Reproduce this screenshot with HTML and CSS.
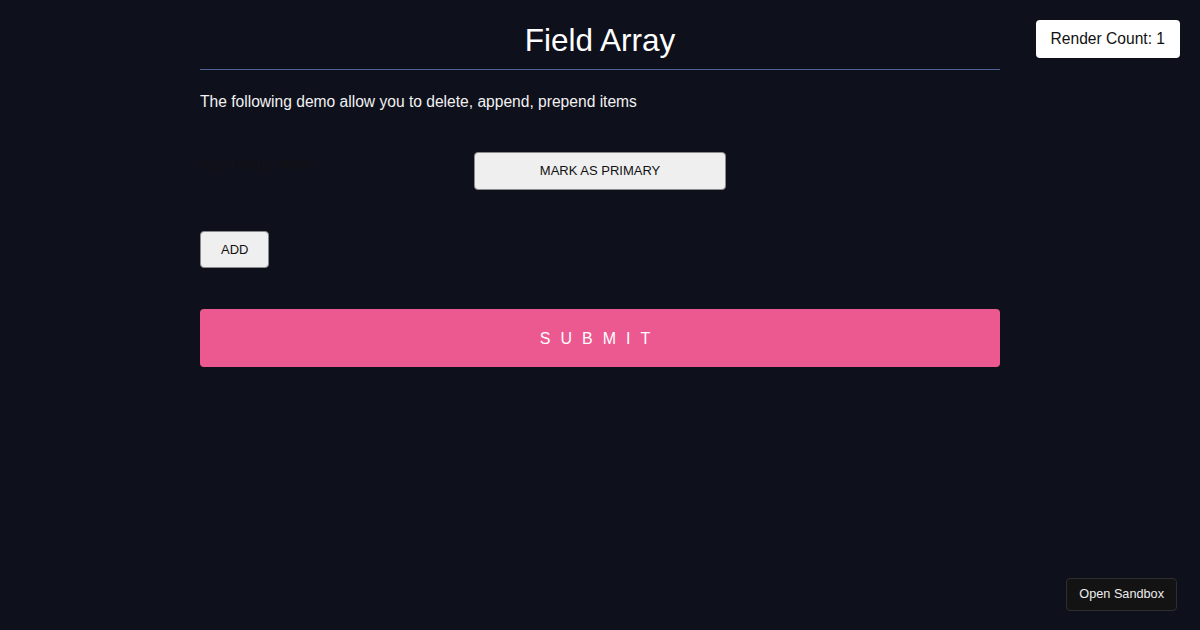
FILE: index.html
```html
<!DOCTYPE html>
<html lang="en">
<head>
<meta charset="utf-8">
<title>Field Array</title>
<link rel="stylesheet" href="styles.css">
</head>
<body>
<div class="render-count">Render Count: 1</div>
<form class="form">
  <h1 class="title">Field Array</h1>
  <p class="intro">The following demo allow you to delete, append, prepend items</p>
  <ul class="items">
    <li class="item">
      <span class="item-label">is primary: false</span>
      <button type="button" class="btn btn-wide">Mark as primary</button>
      <span></span>
    </li>
  </ul>
  <button type="button" class="btn btn-add">Add</button>
  <button type="submit" class="submit">Submit</button>
</form>
<a class="sandbox">Open Sandbox</a>
</body>
</html>
```
FILE: styles.css
```css
* { box-sizing: border-box; }
html, body {
  margin: 0;
  padding: 0;
  background: #0e101c;
  height: 100%;
}
body {
  font-family: "Liberation Sans", Arial, sans-serif;
  color: #fff;
  position: relative;
  overflow: hidden;
}
.form {
  width: 800px;
  margin: 0 auto;
  display: flex;
  flex-direction: column;
  align-items: flex-start;
}
.title {
  align-self: stretch;
  margin: 22px 0 0;
  font-size: 31.5px;
  line-height: 37px;
  font-weight: 100;
  text-align: center;
  padding-bottom: 10px;
  border-bottom: 1px solid rgb(79, 98, 148);
}
.intro {
  margin: 23px 0 0;
  font-size: 15.6px;
  line-height: 18px;
  color: #f2f2f2;
}
.items {
  list-style: none;
  margin: 41px 0 0;
  padding: 0;
  align-self: stretch;
}
.item {
  display: grid;
  grid-template-columns: 1fr 1fr 1fr;
  column-gap: 22px;
  align-items: start;
}
.item-label {
  color: #131313;
  font-size: 15.5px;
  line-height: 18px;
  padding: 3px 0 0 2px;
}
.btn {
  display: block;
  appearance: none;
  background: #efefef;
  color: #111;
  border: 1px solid #8a8a8a;
  border-radius: 4px;
  font-family: "Liberation Sans", Arial, sans-serif;
  font-size: 13px;
  line-height: 16px;
  text-transform: uppercase;
  padding: 0 20px;
  margin: 0;
}
.btn-wide {
  width: 100%;
  height: 38px;
}
.btn-add {
  margin-top: 41px;
  height: 37px;
  padding: 0 20px;
}
.submit {
  align-self: stretch;
  height: 58px;
  margin-top: 41px;
  background: #ec5990;
  color: #fff;
  border: none;
  border-radius: 4px;
  padding: 2px 0 0 0;
  font-family: "Liberation Sans", Arial, sans-serif;
  font-size: 16px;
  line-height: 18px;
  font-weight: 100;
  letter-spacing: 10px;
  text-transform: uppercase;
}
.render-count {
  position: absolute;
  top: 20px;
  right: 20px;
  height: 38px;
  background: #fff;
  color: #111;
  border-radius: 4px;
  font-size: 15.6px;
  line-height: 18px;
  padding: 10px 15px;
  white-space: nowrap;
}
.sandbox {
  position: absolute;
  right: 23px;
  bottom: 19px;
  height: 33px;
  background: #131313;
  color: #eee;
  border: 1px solid #2e2e2e;
  border-radius: 4px;
  font-size: 12.7px;
  line-height: 15px;
  padding: 8px 12px;
  white-space: nowrap;
}
```
